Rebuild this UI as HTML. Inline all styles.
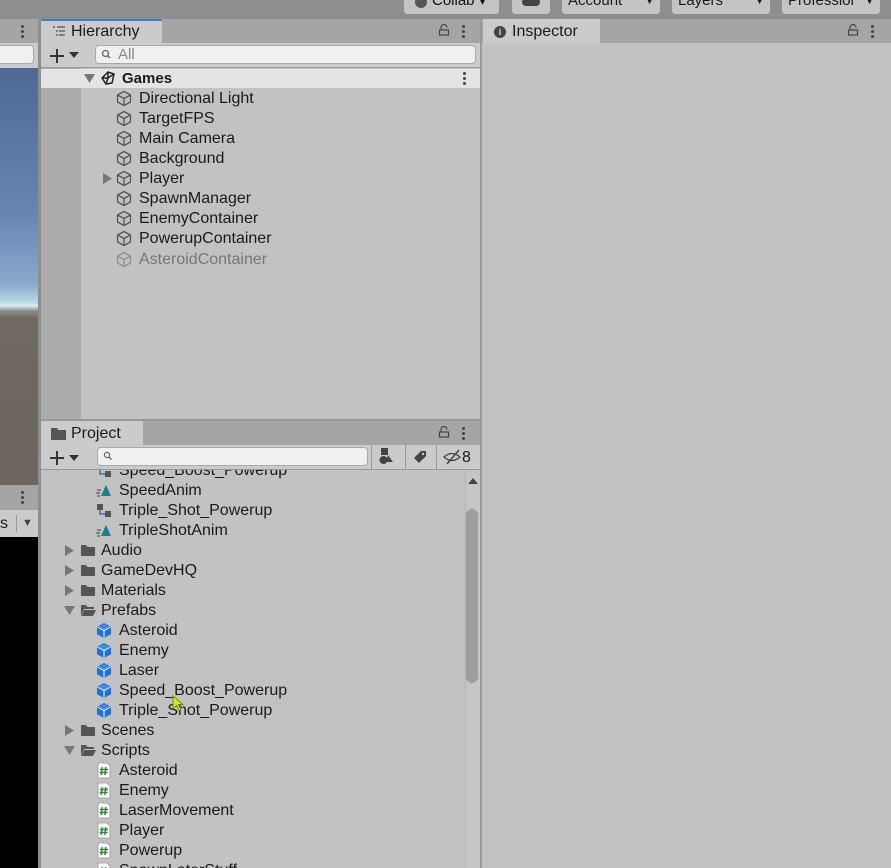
<!DOCTYPE html>
<html style="width:891px;height:868px;overflow:hidden"><head><style>
*{margin:0;padding:0;box-sizing:border-box}
body{width:891px;height:868px;overflow:hidden;background:#c2c2c2;font-family:"Liberation Sans",sans-serif;font-size:15px;color:#1a1a1a;position:relative}
.a{position:absolute}
.row{position:absolute;height:20px;line-height:20px;white-space:nowrap;font-size:16px}
.row svg{position:absolute;top:1px}
.row span{position:absolute;top:0}
.dots{position:absolute;width:3px}
.dots i{display:block;width:3px;height:3px;border-radius:50%;background:#444;margin-bottom:2px}
.tri{position:absolute;font-size:11px;color:#666}
</style></head><body>
<!-- top toolbar -->
<div class="a" style="left:0;top:0;width:891px;height:19px;background:#8e8e8e"></div>
<div class="a" style="left:404px;top:-6px;width:95px;height:20px;background:#c4c4c4;border-radius:3px;font-size:15px;line-height:14px;padding-left:28px;color:#111">Collab ▾</div>
<div class="a" style="left:415px;top:-4px;width:12px;height:12px;border-radius:50%;background:#555"></div>
<div class="a" style="left:512px;top:-6px;width:38px;height:20px;background:#c4c4c4;border-radius:3px"></div>
<div class="a" style="left:522px;top:-2px;width:18px;height:8px;background:#444;border-radius:4px"></div>
<div class="a" style="left:562px;top:-6px;width:98px;height:20px;background:#c4c4c4;border-radius:3px;line-height:14px;padding-left:6px">Account<span style="position:absolute;right:6px;font-size:9px">▼</span></div>
<div class="a" style="left:672px;top:-6px;width:98px;height:20px;background:#c4c4c4;border-radius:3px;line-height:14px;padding-left:6px">Layers<span style="position:absolute;right:6px;font-size:9px">▼</span></div>
<div class="a" style="left:782px;top:-6px;width:98px;height:20px;background:#c4c4c4;border-radius:3px;line-height:14px;padding-left:6px;overflow:hidden">Professior<span style="position:absolute;right:6px;font-size:9px">▼</span></div>

<!-- left scene panel -->
<div class="a" style="left:0;top:19px;width:38px;height:24px;background:#a5a5a5"></div>
<div class="dots" style="left:21px;top:25px"><i></i><i></i><i></i></div>
<div class="a" style="left:0;top:43px;width:38px;height:25px;background:#cbcbcb"></div>
<div class="a" style="left:-6px;top:45px;width:40px;height:19px;background:#f0f0f0;border:1px solid #aaa;border-radius:4px"></div>
<div class="a" style="left:0;top:68px;width:38px;height:417px;background:linear-gradient(#4e6894 0%,#6785b2 35%,#8aaacd 52%,#b8d8e4 56%,#d8eef2 57%,#8c8a88 58.3%,#6f6862 60%,#6b645f 100%)"></div>
<div class="a" style="left:0;top:485px;width:38px;height:25px;background:#a5a5a5"></div>
<div class="dots" style="left:21px;top:491px"><i></i><i></i><i></i></div>
<div class="a" style="left:0;top:510px;width:38px;height:27px;background:#cbcbcb;line-height:27px;font-size:16px">s<span style="position:absolute;left:16px;top:5px;width:1px;height:17px;background:#999"></span><span style="position:absolute;left:22px;font-size:11px;color:#444">▼</span></div>
<div class="a" style="left:0;top:537px;width:38px;height:331px;background:#000"></div>
<div class="a" style="left:38px;top:19px;width:3px;height:849px;background:#8e8e8e"></div>

<!-- hierarchy -->
<div class="a" style="left:41px;top:19px;width:439px;height:24px;background:#a5a5a5"></div>
<div class="a" style="left:41px;top:19px;width:121px;height:24px;background:#cbcbcb;border-top:2px solid #3a79d0;border-radius:2px 2px 0 0"></div>
<svg class="a" style="left:52px;top:25px" width="14" height="12"><g stroke="#555" stroke-width="1.3"><line x1="1" y1="2" x2="3" y2="2"/><line x1="5" y1="2" x2="13" y2="2"/><line x1="4" y1="6" x2="6" y2="6"/><line x1="7" y1="6" x2="13" y2="6"/><line x1="4" y1="10" x2="6" y2="10"/><line x1="7" y1="10" x2="13" y2="10"/></g></svg>
<div class="a" style="left:71px;top:21px;line-height:22px;font-size:16px">Hierarchy</div>
<svg class="a" style="left:438px;top:24px" width="12" height="12"><path d="M3 6V3.5a3 3 0 0 1 6 0" fill="none" stroke="#444" stroke-width="1.2"/><rect x="1.5" y="6" width="9" height="5" fill="none" stroke="#444" stroke-width="1.2"/></svg>
<div class="dots" style="left:462px;top:25px"><i></i><i></i><i></i></div>
<div class="a" style="left:41px;top:43px;width:439px;height:25px;background:#cbcbcb;border-bottom:1px solid #999"></div>
<svg class="a" style="left:49px;top:48px" width="16" height="16"><path d="M8 1V15M1 8H15" stroke="#333" stroke-width="2"/></svg>
<svg class="a" style="left:69px;top:52px" width="10" height="6"><path d="M0 0H10L5 6Z" fill="#333"/></svg>
<div class="a" style="left:95px;top:45px;width:381px;height:19px;background:#f0f0f0;border:1px solid #aaa;border-radius:4px;color:#888;font-size:15px;line-height:17px;padding-left:22px">All</div>
<svg class="a" style="left:101px;top:49px" width="12" height="12"><circle cx="4.5" cy="4.5" r="3" fill="none" stroke="#666" stroke-width="1.3"/><line x1="6.5" y1="6.5" x2="9" y2="9" stroke="#666" stroke-width="1.5"/></svg>
<div class="a" style="left:41px;top:68px;width:40px;height:351px;background:#ababab"></div>
<div class="a" style="left:41px;top:69px;width:439px;height:19px;background:#e4e4e4"></div>
<svg class="a" style="left:84px;top:74px" width="11" height="9"><path d="M0 0H11L5.5 9Z" fill="#777"/></svg>
<svg class="a" style="left:100px;top:70px" width="16" height="16"><path d="M2 8 L8 2 L14 4 L12 13 L6 14 Z M8 2 L8 8 L14 4 M8 8 L6 14 M8 8 L2 8" fill="none" stroke="#222" stroke-width="1.5"/></svg>
<div class="a" style="left:122px;top:68px;line-height:21px;font-weight:bold;font-size:15px">Games</div>
<div class="dots" style="left:463px;top:72px"><i></i><i></i><i></i></div>

<svg width="0" height="0" style="position:absolute"><defs>
<g id="cube"><path d="M8 1.5 L14.5 5 L14.5 12 L8 15.5 L1.5 12 L1.5 5 Z M1.5 5 L8 8.5 L14.5 5 M8 8.5 L8 15.5" fill="none" stroke="#555" stroke-width="1.3" stroke-linejoin="round"/></g>
<g id="bcube"><path d="M8 1 L15 4.8 L15 12.2 L8 16 L1 12.2 L1 4.8 Z" fill="#1f6fd8"/><path d="M1.5 5 L8 8.5 L14.5 5 M8 8.5 L8 15.5" fill="none" stroke="#fff" stroke-width="1"/><path d="M8 2 L14 5 L8 8 L2 5Z" fill="#3a8bef"/></g>
<g id="fold"><path d="M1 3 H6 L7.5 5 H15 V14 H1 Z" fill="#555"/></g>
<g id="ofold"><path d="M1 3 H6 L7.5 5 H14 V7 H4 L1 14 Z" fill="#555"/><path d="M4 8 H16 L13 14 H1.5 Z" fill="#555"/></g>
<g id="scr"><path d="M2 1 H11 L14 4 V16 H2 Z" fill="#fafafa" stroke="#999" stroke-width=".8"/><path d="M6.2 5 L5.2 13 M9.8 5 L8.8 13 M4 7.5 H12 M3.6 10.5 H11.6" stroke="#2f8a3c" stroke-width="1.4"/></g>
<g id="anim"><path d="M10 3 L15 14 H5 Z" fill="#1d7f95"/><path d="M1 8 H5 M0 11 H4 M1 14 H4" stroke="#555" stroke-width="1.2"/></g>
<g id="pref"><rect x="1" y="2" width="6" height="6" fill="#555"/><rect x="9" y="9" width="6" height="6" fill="#555"/><path d="M4 8 V12 H9" fill="none" stroke="#1d7fbf" stroke-width="1.5"/></g>
</defs></svg>

<div class="row" style="left:116px;top:89px"><svg width="17" height="17"><use href="#cube"/></svg><span style="left:23px">Directional Light</span></div>
<div class="row" style="left:116px;top:109px"><svg width="17" height="17"><use href="#cube"/></svg><span style="left:23px">TargetFPS</span></div>
<div class="row" style="left:116px;top:129px"><svg width="17" height="17"><use href="#cube"/></svg><span style="left:23px">Main Camera</span></div>
<div class="row" style="left:116px;top:149px"><svg width="17" height="17"><use href="#cube"/></svg><span style="left:23px">Background</span></div>
<svg class="a" style="left:103px;top:173px" width="9" height="11"><path d="M0 0V11L9 5.5Z" fill="#777"/></svg>
<div class="row" style="left:116px;top:169px"><svg width="17" height="17"><use href="#cube"/></svg><span style="left:23px">Player</span></div>
<div class="row" style="left:116px;top:189px"><svg width="17" height="17"><use href="#cube"/></svg><span style="left:23px">SpawnManager</span></div>
<div class="row" style="left:116px;top:209px"><svg width="17" height="17"><use href="#cube"/></svg><span style="left:23px">EnemyContainer</span></div>
<div class="row" style="left:116px;top:229px"><svg width="17" height="17"><use href="#cube"/></svg><span style="left:23px">PowerupContainer</span></div>
<div class="row" style="left:116px;top:250px;opacity:.45"><svg width="17" height="17"><use href="#cube"/></svg><span style="left:23px">AsteroidContainer</span></div>

<div class="a" style="left:480px;top:19px;width:2px;height:849px;background:#999"></div>

<!-- inspector -->
<div class="a" style="left:482px;top:19px;width:409px;height:24px;background:#a5a5a5"></div>
<div class="a" style="left:483px;top:19px;width:117px;height:24px;background:#cbcbcb"></div>
<div class="a" style="left:494px;top:26px;width:12px;height:12px;border-radius:50%;background:#444;color:#ddd;font-size:9px;line-height:12px;text-align:center;font-weight:bold">i</div>
<div class="a" style="left:512px;top:21px;line-height:22px;font-size:16px">Inspector</div>
<svg class="a" style="left:847px;top:24px" width="12" height="12"><path d="M3 6V3.5a3 3 0 0 1 6 0" fill="none" stroke="#444" stroke-width="1.2"/><rect x="1.5" y="6" width="9" height="5" fill="none" stroke="#444" stroke-width="1.2"/></svg>
<div class="dots" style="left:871px;top:25px"><i></i><i></i><i></i></div>

<!-- project -->
<div class="a" style="left:41px;top:419px;width:439px;height:2px;background:#999"></div>
<div class="a" style="left:41px;top:421px;width:439px;height:24px;background:#a5a5a5"></div>
<div class="a" style="left:41px;top:421px;width:102px;height:24px;background:#cbcbcb"></div>
<svg class="a" style="left:51px;top:427px" width="16" height="14"><path d="M0 1 H6 L7.5 3 H15 V13 H0 Z" fill="#555"/></svg>
<div class="a" style="left:71px;top:423px;line-height:22px;font-size:16px">Project</div>
<svg class="a" style="left:438px;top:426px" width="12" height="12"><path d="M3 6V3.5a3 3 0 0 1 6 0" fill="none" stroke="#444" stroke-width="1.2"/><rect x="1.5" y="6" width="9" height="5" fill="none" stroke="#444" stroke-width="1.2"/></svg>
<div class="dots" style="left:462px;top:427px"><i></i><i></i><i></i></div>
<div class="a" style="left:41px;top:445px;width:439px;height:25px;background:#cbcbcb;border-bottom:1px solid #999"></div>
<svg class="a" style="left:49px;top:450px" width="16" height="16"><path d="M8 1V15M1 8H15" stroke="#333" stroke-width="2"/></svg>
<svg class="a" style="left:69px;top:455px" width="10" height="6"><path d="M0 0H10L5 6Z" fill="#333"/></svg>
<div class="a" style="left:97px;top:447px;width:271px;height:19px;background:#f0f0f0;border:1px solid #aaa;border-radius:4px"></div>
<svg class="a" style="left:103px;top:451px" width="10" height="10"><circle cx="4" cy="4" r="2.6" fill="none" stroke="#666" stroke-width="1.2"/><line x1="6" y1="6" x2="8.5" y2="8.5" stroke="#666" stroke-width="1.4"/></svg>
<div class="a" style="left:371px;top:445px;width:1px;height:25px;background:#999"></div>
<div class="a" style="left:405px;top:445px;width:1px;height:25px;background:#999"></div>
<div class="a" style="left:436px;top:445px;width:1px;height:25px;background:#999"></div>
<svg class="a" style="left:378px;top:448px" width="20" height="18"><rect x="3" y="0" width="7" height="7" fill="#444"/><circle cx="5.5" cy="12" r="4" fill="#444"/><path d="M10 7 L15 14 H8 Z" fill="#444"/></svg>
<svg class="a" style="left:412px;top:450px" width="16" height="14"><path d="M2 8 L9 1 H14 V6 L7 13 Z" fill="#444"/><circle cx="11" cy="4" r="1.2" fill="#cbcbcb"/></svg>
<svg class="a" style="left:443px;top:449px" width="20" height="16"><path d="M1 8 Q9 1 17 8 Q9 15 1 8Z" fill="none" stroke="#444" stroke-width="1.3"/><line x1="4" y1="15" x2="16" y2="1" stroke="#444" stroke-width="1.5"/></svg>
<div class="a" style="left:462px;top:447px;line-height:22px;font-size:16px">8</div>

<div class="a" style="left:465px;top:470px;width:15px;height:398px;background:#c6c6c6;border-left:1px solid #b4b4b4"></div>
<svg class="a" style="left:468px;top:478px" width="10" height="6"><path d="M0 6H10L5 0Z" fill="#444"/></svg>
<div class="a" style="left:466px;top:509px;width:12px;height:174px;background:#9e9e9e;border-radius:6px"></div>

<div style="position:absolute;left:41px;top:470px;width:424px;height:398px;overflow:hidden">
<div class="row" style="left:55px;top:-9px"><svg width="17" height="17"><use href="#pref"/></svg><span style="left:23px">Speed_Boost_Powerup</span></div>
<div class="row" style="left:55px;top:391px"><svg width="17" height="17"><use href="#scr"/></svg><span style="left:23px">SpawnLaterStuff</span></div>
</div>
<div class="row" style="left:96px;top:481px"><svg width="17" height="17"><use href="#anim"/></svg><span style="left:23px">SpeedAnim</span></div>
<div class="row" style="left:96px;top:501px"><svg width="17" height="17"><use href="#pref"/></svg><span style="left:23px">Triple_Shot_Powerup</span></div>
<div class="row" style="left:96px;top:521px"><svg width="17" height="17"><use href="#anim"/></svg><span style="left:23px">TripleShotAnim</span></div>

<svg class="a" style="left:65px;top:545px" width="9" height="11"><path d="M0 0V11L9 5.5Z" fill="#777"/></svg>
<div class="row" style="left:80px;top:541px"><svg width="17" height="17"><use href="#fold"/></svg><span style="left:21px">Audio</span></div>
<svg class="a" style="left:65px;top:565px" width="9" height="11"><path d="M0 0V11L9 5.5Z" fill="#777"/></svg>
<div class="row" style="left:80px;top:561px"><svg width="17" height="17"><use href="#fold"/></svg><span style="left:21px">GameDevHQ</span></div>
<svg class="a" style="left:65px;top:585px" width="9" height="11"><path d="M0 0V11L9 5.5Z" fill="#777"/></svg>
<div class="row" style="left:80px;top:581px"><svg width="17" height="17"><use href="#fold"/></svg><span style="left:21px">Materials</span></div>
<svg class="a" style="left:64px;top:606px" width="11" height="9"><path d="M0 0H11L5.5 9Z" fill="#777"/></svg>
<div class="row" style="left:80px;top:601px"><svg width="17" height="17"><use href="#ofold"/></svg><span style="left:21px">Prefabs</span></div>
<div class="row" style="left:96px;top:621px"><svg width="17" height="17"><use href="#bcube"/></svg><span style="left:23px">Asteroid</span></div>
<div class="row" style="left:96px;top:641px"><svg width="17" height="17"><use href="#bcube"/></svg><span style="left:23px">Enemy</span></div>
<div class="row" style="left:96px;top:661px"><svg width="17" height="17"><use href="#bcube"/></svg><span style="left:23px">Laser</span></div>
<div class="row" style="left:96px;top:681px"><svg width="17" height="17"><use href="#bcube"/></svg><span style="left:23px">Speed_Boost_Powerup</span></div>
<div class="row" style="left:96px;top:701px"><svg width="17" height="17"><use href="#bcube"/></svg><span style="left:23px">Triple_Shot_Powerup</span></div>
<svg class="a" style="left:172px;top:695px" width="14" height="18"><path d="M1 1 L1 14 L4.5 10.5 L7 16 L9 15 L6.5 9.5 L11 9.5 Z" fill="#c8f000" stroke="#5a6a00" stroke-width=".7"/></svg>
<svg class="a" style="left:65px;top:725px" width="9" height="11"><path d="M0 0V11L9 5.5Z" fill="#777"/></svg>
<div class="row" style="left:80px;top:721px"><svg width="17" height="17"><use href="#fold"/></svg><span style="left:21px">Scenes</span></div>
<svg class="a" style="left:64px;top:746px" width="11" height="9"><path d="M0 0H11L5.5 9Z" fill="#777"/></svg>
<div class="row" style="left:80px;top:741px"><svg width="17" height="17"><use href="#ofold"/></svg><span style="left:21px">Scripts</span></div>
<div class="row" style="left:96px;top:761px"><svg width="17" height="17"><use href="#scr"/></svg><span style="left:23px">Asteroid</span></div>
<div class="row" style="left:96px;top:781px"><svg width="17" height="17"><use href="#scr"/></svg><span style="left:23px">Enemy</span></div>
<div class="row" style="left:96px;top:801px"><svg width="17" height="17"><use href="#scr"/></svg><span style="left:23px">LaserMovement</span></div>
<div class="row" style="left:96px;top:821px"><svg width="17" height="17"><use href="#scr"/></svg><span style="left:23px">Player</span></div>
<div class="row" style="left:96px;top:841px"><svg width="17" height="17"><use href="#scr"/></svg><span style="left:23px">Powerup</span></div>
</body></html>
